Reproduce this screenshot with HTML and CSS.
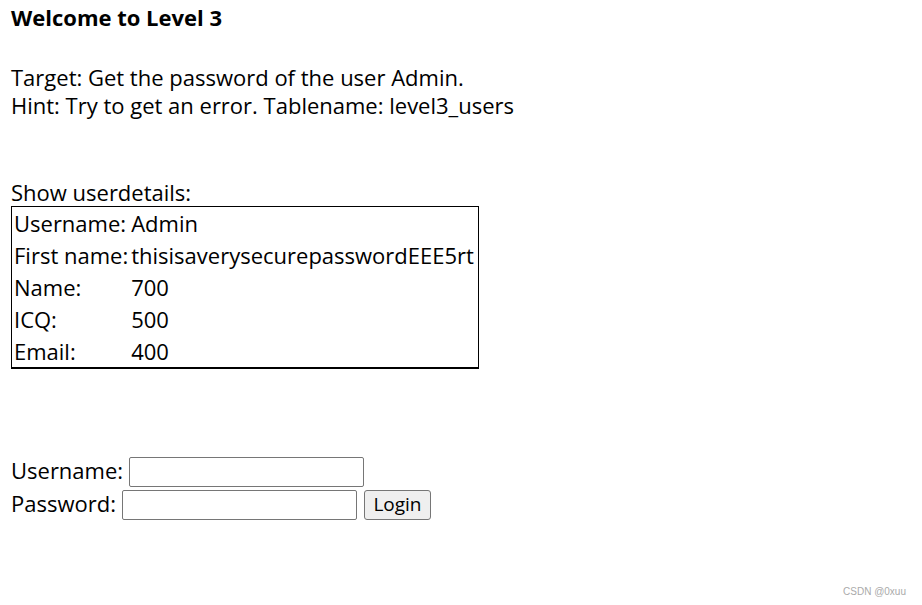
FILE: index.html
```html
<!DOCTYPE html>
<html>
<head>
<meta charset="utf-8">
<link rel="stylesheet" href="styles.css">
</head>
<body>
<div class="page">
  <div class="title">Welcome to Level 3</div>
  <div class="info">
    <div>Target: Get the password of the user Admin.</div>
    <div>Hint: Try to get an error. Tablename: level3_users</div>
  </div>
  <div class="show">Show userdetails:</div>
  <table class="details">
    <tr><td>Username:</td><td>Admin</td></tr>
    <tr><td>First name:</td><td>thisisaverysecurepasswordEEE5rt</td></tr>
    <tr><td>Name:</td><td>700</td></tr>
    <tr><td>ICQ:</td><td>500</td></tr>
    <tr><td>Email:</td><td>400</td></tr>
  </table>
  <form class="login">
    <div class="row"><label>Username:</label><input type="text" class="field"></div>
    <div class="row"><label>Password:</label><input type="password" class="field"><button type="button" class="btn">Login</button></div>
  </form>
</div>
<div class="watermark">CSDN @0xuu</div>
</body>
</html>
```
FILE: styles.css
```css
html, body {
  margin: 0;
  padding: 0;
  background: #fff;
}
body {
  font-family: "Open Sans", "Noto Sans", sans-serif;
  font-size: 22px;
  color: #000;
  width: 922px;
  height: 605px;
  overflow: hidden;
  position: relative;
}
.page {
  padding: 3px 11px 0 11px;
}
.title {
  font-weight: bold;
  line-height: 28px;
}
.info {
  margin-top: 32px;
  line-height: 28px;
}
.show {
  margin-top: 59px;
  line-height: 28px;
}
.details {
  border: 1px solid #000;
  border-bottom-width: 2px;
  border-collapse: separate;
  border-spacing: 0;
}
.details td {
  padding: 0 1px 0 2px;
  line-height: 32px;
  white-space: nowrap;
}
.details td + td {
  padding-right: 4px;
}
.login {
  margin: 86px 0 0 0;
}
.row {
  display: flex;
  align-items: center;
  height: 33px;
}
.row label {
  margin-right: 6px;
  padding-bottom: 3px;
}
.field {
  width: 235px;
  height: 30px;
  box-sizing: border-box;
  border: 1px solid #767676;
  border-radius: 2px;
  padding: 1px 2px;
  margin: 0;
  font-size: 18px;
}
.btn {
  margin-left: 7px;
  height: 30px;
  width: 67px;
  box-sizing: border-box;
  border: 1px solid #767676;
  border-radius: 3px;
  background: #efefef;
  font-family: "Open Sans", "Noto Sans", sans-serif;
  font-size: 19px;
  color: #000;
  padding: 0 0 2px 0;
}
.watermark {
  position: absolute;
  right: 16px;
  bottom: 8px;
  font-family: "Liberation Sans", sans-serif;
  font-size: 10px;
  color: #aaa;
}
```
